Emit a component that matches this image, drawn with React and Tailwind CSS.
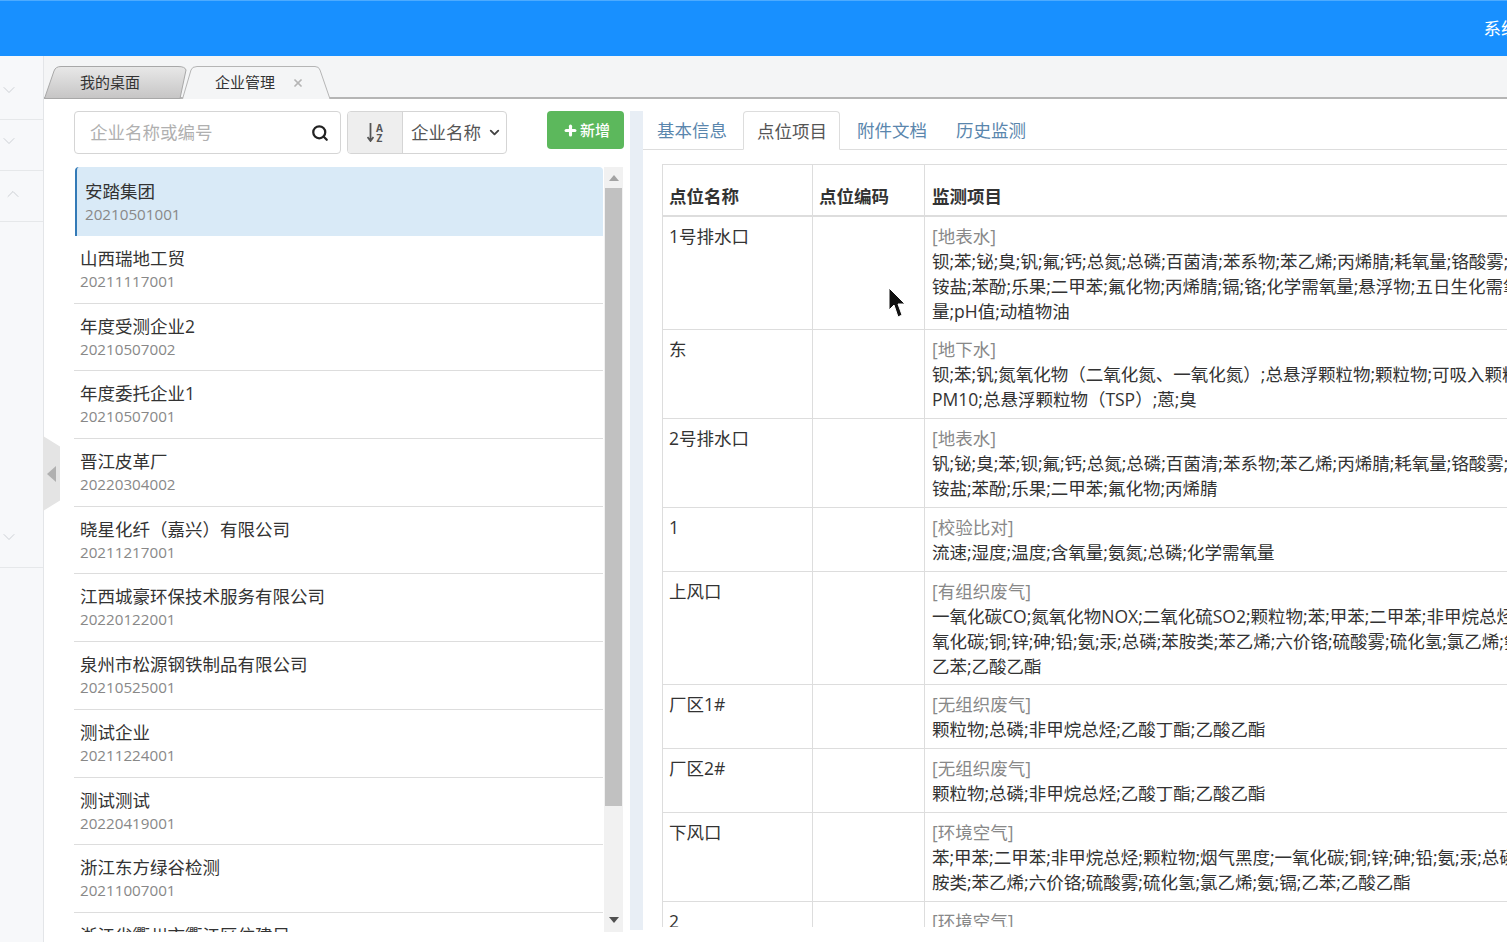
import React from 'react';
import { ChevronDown, ChevronUp, Search, Plus, X } from 'lucide-react';

const COMPANIES = [
  { name: '安踏集团', code: '20210501001' },
  { name: '山西瑞地工贸', code: '20211117001' },
  { name: '年度受测企业2', code: '20210507002' },
  { name: '年度委托企业1', code: '20210507001' },
  { name: '晋江皮革厂', code: '20220304002' },
  { name: '晓星化纤（嘉兴）有限公司', code: '20211217001' },
  { name: '江西城豪环保技术服务有限公司', code: '20220122001' },
  { name: '泉州市松源钢铁制品有限公司', code: '20210525001' },
  { name: '测试企业', code: '20211224001' },
  { name: '测试测试', code: '20220419001' },
  { name: '浙江东方绿谷检测', code: '20211007001' },
  { name: '浙江省衢州市衢江区住建局', code: '20210601001' },
];

const POINTS = [
  { name: '1号排水口', type: '[地表水]', lines: ['钡;苯;铋;臭;钒;氟;钙;总氮;总磷;百菌清;苯系物;苯乙烯;丙烯腈;耗氧量;铬酸雾;氨氮;', '铵盐;苯酚;乐果;二甲苯;氟化物;丙烯腈;镉;铬;化学需氧量;悬浮物;五日生化需氧', '量;pH值;动植物油'] },
  { name: '东', type: '[地下水]', lines: ['钡;苯;钒;氮氧化物（二氧化氮、一氧化氮）;总悬浮颗粒物;颗粒物;可吸入颗粒物', 'PM10;总悬浮颗粒物（TSP）;蒽;臭'] },
  { name: '2号排水口', type: '[地表水]', lines: ['钒;铋;臭;苯;钡;氟;钙;总氮;总磷;百菌清;苯系物;苯乙烯;丙烯腈;耗氧量;铬酸雾;氨氮;', '铵盐;苯酚;乐果;二甲苯;氟化物;丙烯腈'] },
  { name: '1', type: '[校验比对]', lines: ['流速;湿度;温度;含氧量;氨氮;总磷;化学需氧量'] },
  { name: '上风口', type: '[有组织废气]', lines: ['一氧化碳CO;氮氧化物NOX;二氧化硫SO2;颗粒物;苯;甲苯;二甲苯;非甲烷总烃;', '氧化碳;铜;锌;砷;铅;氨;汞;总磷;苯胺类;苯乙烯;六价铬;硫酸雾;硫化氢;氯乙烯;氨;', '乙苯;乙酸乙酯'] },
  { name: '厂区1#', type: '[无组织废气]', lines: ['颗粒物;总磷;非甲烷总烃;乙酸丁酯;乙酸乙酯'] },
  { name: '厂区2#', type: '[无组织废气]', lines: ['颗粒物;总磷;非甲烷总烃;乙酸丁酯;乙酸乙酯'] },
  { name: '下风口', type: '[环境空气]', lines: ['苯;甲苯;二甲苯;非甲烷总烃;颗粒物;烟气黑度;一氧化碳;铜;锌;砷;铅;氨;汞;总磷;苯', '胺类;苯乙烯;六价铬;硫酸雾;硫化氢;氯乙烯;氨;镉;乙苯;乙酸乙酯'] },
  { name: '2', type: '[环境空气]', lines: ['苯;甲苯'] },
];

const FONT = "font-['Open_Sans','Noto_Sans_CJK_SC',sans-serif]";

function Rail() {
  return (
    <div className="w-[44px] shrink-0 bg-[#f7f8fa] border-r border-[#e3e5e8] text-[#c4c8cc]">
      <div className="h-[64px] border-b border-[#e6e8ea] flex items-center pt-[4px]"><ChevronDown size={20} strokeWidth={1} className="-ml-[1px]" /></div>
      <div className="h-[51px] border-b border-[#e6e8ea] flex items-center pb-[8px]"><ChevronDown size={20} strokeWidth={1} className="-ml-[1px]" /></div>
      <div className="h-[51px] border-b border-[#e6e8ea] flex items-center pb-[4px]"><ChevronUp size={20} strokeWidth={1} className="ml-[3px]" /></div>
      <div className="h-[346px] border-b border-[#e6e8ea] flex items-end pb-[20px]"><ChevronDown size={20} strokeWidth={1} className="-ml-[1px]" /></div>
    </div>
  );
}

function TabStrip() {
  return (
    <div className="h-[43px] shrink-0 bg-[#f4f5f6] border-b-2 border-[#b5b5b5] flex items-start pt-[10px]">
      <div className="relative w-[142px] h-[33px] text-[15px] leading-[33px] text-[#333] pl-[36px]">
        <svg className="absolute left-0 top-0" width="143" height="33" viewBox="0 0 143 33">
          <defs>
            <linearGradient id="tabOff" x1="0" y1="0" x2="0" y2="1">
              <stop offset="0" stopColor="#e8e8e8" />
              <stop offset="1" stopColor="#c6c5c5" />
            </linearGradient>
          </defs>
          <path d="M0.5 32.5 L10 5 Q11.5 0.5 17 0.5 L134 0.5 Q141 0.5 142 4 L136 32.5 Z" fill="url(#tabOff)" stroke="#a8a8a8" />
        </svg>
        <span className="relative">我的桌面</span>
      </div>
      <div className="relative -ml-[4px] w-[149px] h-[33px] text-[15px] leading-[33px] text-[#333] pl-[33px] flex items-center">
        <svg className="absolute left-0 top-0" width="149" height="33" viewBox="0 0 149 33">
          <path d="M0.5 33 L9 4 Q10 0.5 15 0.5 L133 0.5 Q137 0.5 138 4 L148 33 Z" fill="#f4f5f6" />
          <path d="M0.5 33 L9 4 Q10 0.5 15 0.5 L133 0.5 Q137 0.5 138 4 L148 33" fill="none" stroke="#b5b5b5" />
        </svg>
        <span className="relative">企业管理</span>
        <X size={12} strokeWidth={3.5} className="relative ml-[17px] text-[#b5b5b5]" />
      </div>
    </div>
  );
}

function SortIcon() {
  return (
    <div className="flex items-center gap-[2px] text-[#555]">
      <svg width="7" height="19" viewBox="0 0 7 19">
        <path d="M3.5 0 V17 M0.5 14 L3.5 18 L6.5 14" fill="none" stroke="currentColor" strokeWidth="1.8" />
      </svg>
      <div className="flex flex-col items-center text-[10px] leading-[10px] font-bold">
        <span>A</span>
        <span>Z</span>
      </div>
    </div>
  );
}

function CompanyList() {
  return (
    <div className="w-[550px] shrink-0">
      <div className="flex items-start h-[56px]">
        <div className="w-[267px] h-[43px] border border-[#d5d5d5] rounded-[4px] flex items-center justify-between pl-[15px] pr-[11px]">
          <span className="text-[17.5px] text-[#b0b0b0]">企业名称或编号</span>
          <Search size={18} strokeWidth={3} className="text-[#222]" />
        </div>
        <div className="ml-[6px] w-[160px] h-[43px] border border-[#d5d5d5] rounded-[4px] flex items-stretch overflow-hidden">
          <div className="w-[55px] bg-[#eeeeee] border-r border-[#d5d5d5] flex items-center justify-center">
            <SortIcon />
          </div>
          <div className="flex-1 flex items-center justify-between pl-[8px] pr-[4px]">
            <span className="text-[17.5px] text-[#555]">企业名称</span>
            <ChevronDown size={15} strokeWidth={3} className="text-[#444]" />
          </div>
        </div>
        <button className="ml-[40px] w-[77px] h-[38px] bg-[#5cb85c] rounded-[4px] text-white text-[15px] font-medium flex items-center justify-center gap-[2px] pl-[2px]">
          <Plus size={15} strokeWidth={5} />
          新增
        </button>
      </div>
      <div className="flex h-[765px]">
        <div className="w-[529px] overflow-hidden">
          {COMPANIES.map((c, i) => (
            <div
              key={c.code}
              className={i === 0
                ? 'h-[69px] ml-[1px] bg-[#d9eaf7] border-l-[2px] border-[#337ab7] pl-[8px] pt-[11px] rounded-t-[4px]'
                : 'h-[67.7px] border-b border-[#dddddd] pl-[6px] pt-[9px]'}
            >
              <div className="text-[17.5px] leading-[26px] text-[#333]">{c.name}</div>
              <div className="text-[15.2px] leading-[20px] text-[#888]">{c.code}</div>
            </div>
          ))}
        </div>
        <div className="w-[19px] ml-[1px] bg-[#f1f1f1] flex flex-col items-center">
          <div className="h-[21px] flex items-center justify-center">
            <div className="w-0 h-0 border-x-[5px] border-x-transparent border-b-[6px] border-b-[#a3a3a3]" />
          </div>
          <div className="w-[17px] h-[618px] bg-[#c1c1c1]" />
          <div className="flex-1" />
          <div className="h-[24px] flex items-center justify-center">
            <div className="w-0 h-0 border-x-[5px] border-x-transparent border-t-[6px] border-t-[#505050]" />
          </div>
        </div>
      </div>
    </div>
  );
}

function PointTable() {
  return (
    <div className="h-[763px] mt-[14px] ml-[19px] overflow-hidden">
      <table className="w-[1000px] table-fixed border-collapse border border-[#dddddd] text-[17.5px] leading-[25px] text-[#333]">
        <colgroup>
          <col className="w-[150px]" />
          <col className="w-[112px]" />
          <col />
        </colgroup>
        <thead>
          <tr className="border-b-2 border-[#dddddd]">
            <th className="h-[51px] border-r border-[#dddddd] text-left align-bottom px-[6px] pb-[6px] font-bold">点位名称</th>
            <th className="border-r border-[#dddddd] text-left align-bottom px-[6px] pb-[6px] font-bold">点位编码</th>
            <th className="text-left align-bottom pl-[7px] pb-[6px] font-bold">监测项目</th>
          </tr>
        </thead>
        <tbody>
          {POINTS.map(p => (
            <tr key={p.type + p.name} className="border-b border-[#dddddd]">
              <td className="align-top px-[6px] pt-[7px] pb-[5.75px] border-r border-[#dddddd]">{p.name}</td>
              <td className="border-r border-[#dddddd]" />
              <td className="align-top pl-[7px] pt-[7px] pb-[5.75px] whitespace-nowrap overflow-hidden">
                <div className="text-[#888]">{p.type}</div>
                {p.lines.map(l => <div key={l}>{l}</div>)}
              </td>
            </tr>
          ))}
        </tbody>
      </table>
    </div>
  );
}

function Detail() {
  return (
    <div className="flex-1 min-w-0 overflow-hidden">
      <div className="h-[39px] border-b border-[#dddddd] flex items-end">
        {['基本信息', '点位项目', '附件文档', '历史监测'].map((t, i) => (
          <div
            key={t}
            className={i === 1
              ? 'h-[39px] pl-[13px] pr-[12px] ml-[2px] mr-[3px] -mb-px bg-white border border-[#dddddd] border-b-white rounded-t-[4px] text-[17.5px] leading-[38px] text-[#555]'
              : 'h-[39px] px-[14px] last:ml-[1px] text-[17.5px] leading-[41px] text-[#5a86ad]'}
          >
            {t}
          </div>
        ))}
      </div>
      <PointTable />
    </div>
  );
}

export default function App() {
  return (
    <div className={`w-[1507px] h-[942px] overflow-hidden relative bg-white flex flex-col ${FONT}`}>
      <div className="h-[56px] shrink-0 bg-[#1890ff] border-t border-[#4dabff] flex items-center justify-end overflow-hidden">
        <span className="text-white text-[17.5px] whitespace-nowrap -mr-[64px]">系统管理员</span>
      </div>
      <div className="flex flex-1 min-h-0">
        <Rail />
        <div className="flex-1 min-w-0 flex flex-col relative">
          <TabStrip />
          <div className="flex-1 min-h-0 flex pl-[30px] pt-[12px]">
            <CompanyList />
            <div className="ml-[6px] w-[13px] h-[819px] bg-[#e8eef5]" />
            <Detail />
          </div>
        </div>
      </div>
      {/* collapse handle on the rail edge */}
      <div className="absolute left-[43px] top-[436px] w-[17px] h-[75px] bg-[#e4e4e4] [clip-path:polygon(0_0,100%_14%,100%_86%,0_100%)] flex items-center justify-center">
        <div className="w-0 h-0 border-y-[8px] border-y-transparent border-r-[9px] border-r-[#b0b0b0]" />
      </div>
      {/* mouse pointer */}
      <svg className="absolute left-[888px] top-[287px]" width="19" height="32" viewBox="0 0 19 32">
        <path d="M1 1 L1 23 L6 18 L10 30 L14 28 L10 17 L17 17 Z" fill="#111" stroke="#fff" strokeWidth="1" />
      </svg>
    </div>
  );
}
